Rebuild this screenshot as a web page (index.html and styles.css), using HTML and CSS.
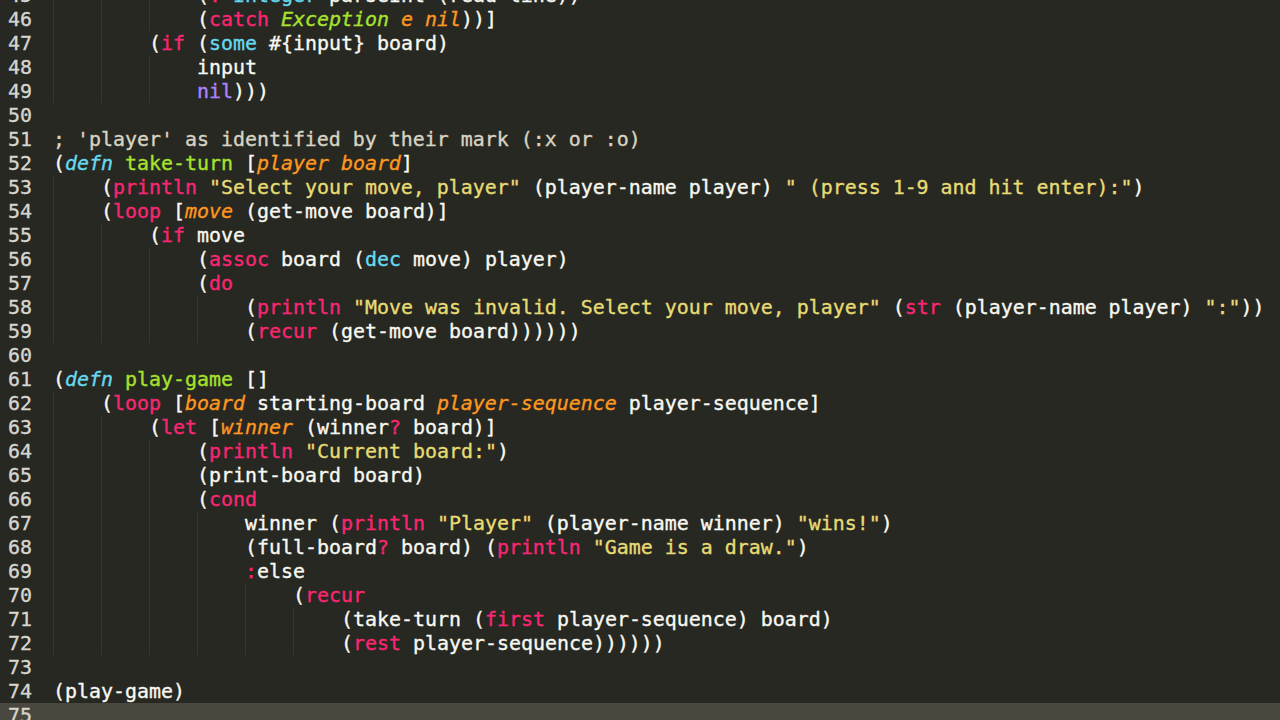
FILE: index.html
```html
<!DOCTYPE html>
<html>
<head>
<meta charset="utf-8">
<link rel="stylesheet" href="styles.css">
</head>
<body>
<div class="editor">
<div class="row"><span class="ln">45</span><span class="code"><span class="ind"></span><span class="ind"></span><span class="ind"></span>(<span class="k">.</span> <span class="t">Integer</span> parseInt (read-line))</span></div>
<div class="row"><span class="ln">46</span><span class="code"><span class="ind"></span><span class="ind"></span><span class="ind"></span>(<span class="k">catch</span> <span class="g i">Exception</span> <span class="p">e nil</span>))]</span></div>
<div class="row"><span class="ln">47</span><span class="code"><span class="ind"></span><span class="ind"></span>(<span class="k">if</span> (<span class="t">some</span> #{input} board)</span></div>
<div class="row"><span class="ln">48</span><span class="code"><span class="ind"></span><span class="ind"></span><span class="ind"></span>input</span></div>
<div class="row"><span class="ln">49</span><span class="code"><span class="ind"></span><span class="ind"></span><span class="ind"></span><span class="n">nil</span>)))</span></div>
<div class="row"><span class="ln">50</span><span class="code"></span></div>
<div class="row"><span class="ln">51</span><span class="code"><span class="c">; 'player' as identified by their mark (:x or :o)</span></span></div>
<div class="row"><span class="ln">52</span><span class="code">(<span class="t i">defn</span> <span class="g">take-turn</span> [<span class="p">player board</span>]</span></div>
<div class="row"><span class="ln">53</span><span class="code"><span class="ind"></span>(<span class="k">println</span> <span class="s">"Select your move, player"</span> (player-name player) <span class="s">" (press 1-9 and hit enter):"</span>)</span></div>
<div class="row"><span class="ln">54</span><span class="code"><span class="ind"></span>(<span class="k">loop</span> [<span class="p">move</span> (get-move board)]</span></div>
<div class="row"><span class="ln">55</span><span class="code"><span class="ind"></span><span class="ind"></span>(<span class="k">if</span> move</span></div>
<div class="row"><span class="ln">56</span><span class="code"><span class="ind"></span><span class="ind"></span><span class="ind"></span>(<span class="k">assoc</span> board (<span class="t">dec</span> move) player)</span></div>
<div class="row"><span class="ln">57</span><span class="code"><span class="ind"></span><span class="ind"></span><span class="ind"></span>(<span class="k">do</span></span></div>
<div class="row"><span class="ln">58</span><span class="code"><span class="ind"></span><span class="ind"></span><span class="ind"></span><span class="ind"></span>(<span class="k">println</span> <span class="s">"Move was invalid. Select your move, player"</span> (<span class="k">str</span> (player-name player) <span class="s">":"</span>))</span></div>
<div class="row"><span class="ln">59</span><span class="code"><span class="ind"></span><span class="ind"></span><span class="ind"></span><span class="ind"></span>(<span class="k">recur</span> (get-move board))))))</span></div>
<div class="row"><span class="ln">60</span><span class="code"></span></div>
<div class="row"><span class="ln">61</span><span class="code">(<span class="t i">defn</span> <span class="g">play-game</span> []</span></div>
<div class="row"><span class="ln">62</span><span class="code"><span class="ind"></span>(<span class="k">loop</span> [<span class="p">board</span> starting-board <span class="p">player-sequence</span> player-sequence]</span></div>
<div class="row"><span class="ln">63</span><span class="code"><span class="ind"></span><span class="ind"></span>(<span class="k">let</span> [<span class="p">winner</span> (winner<span class="k">?</span> board)]</span></div>
<div class="row"><span class="ln">64</span><span class="code"><span class="ind"></span><span class="ind"></span><span class="ind"></span>(<span class="k">println</span> <span class="s">"Current board:"</span>)</span></div>
<div class="row"><span class="ln">65</span><span class="code"><span class="ind"></span><span class="ind"></span><span class="ind"></span>(print-board board)</span></div>
<div class="row"><span class="ln">66</span><span class="code"><span class="ind"></span><span class="ind"></span><span class="ind"></span>(<span class="k">cond</span></span></div>
<div class="row"><span class="ln">67</span><span class="code"><span class="ind"></span><span class="ind"></span><span class="ind"></span><span class="ind"></span>winner (<span class="k">println</span> <span class="s">"Player"</span> (player-name winner) <span class="s">"wins!"</span>)</span></div>
<div class="row"><span class="ln">68</span><span class="code"><span class="ind"></span><span class="ind"></span><span class="ind"></span><span class="ind"></span>(full-board<span class="k">?</span> board) (<span class="k">println</span> <span class="s">"Game is a draw."</span>)</span></div>
<div class="row"><span class="ln">69</span><span class="code"><span class="ind"></span><span class="ind"></span><span class="ind"></span><span class="ind"></span><span class="k">:</span>else</span></div>
<div class="row"><span class="ln">70</span><span class="code"><span class="ind"></span><span class="ind"></span><span class="ind"></span><span class="ind"></span><span class="ind"></span>(<span class="k">recur</span></span></div>
<div class="row"><span class="ln">71</span><span class="code"><span class="ind"></span><span class="ind"></span><span class="ind"></span><span class="ind"></span><span class="ind"></span><span class="ind"></span>(take-turn (<span class="k">first</span> player-sequence) board)</span></div>
<div class="row"><span class="ln">72</span><span class="code"><span class="ind"></span><span class="ind"></span><span class="ind"></span><span class="ind"></span><span class="ind"></span><span class="ind"></span>(<span class="k">rest</span> player-sequence))))))</span></div>
<div class="row"><span class="ln">73</span><span class="code"></span></div>
<div class="row"><span class="ln">74</span><span class="code">(play-game)</span></div>
<div class="row current"><span class="ln">75</span><span class="code"></span></div>
</div>
</body>
</html>
```
FILE: styles.css
```css
html, body {
  margin: 0;
  padding: 0;
  background: #272822;
  overflow: hidden;
  height: 720px;
}

.editor {
  margin-top: -17px;
  font-family: "DejaVu Sans Mono", "Liberation Mono", monospace;
  font-size: 19.93px;
  color: #f8f8f2;
  -webkit-text-stroke: 0.35px currentColor;
}

.row {
  display: flex;
  height: 24px;
  line-height: 26px;
  white-space: pre;
}

.row.current {
  background: #4a483e;
}

.ln {
  width: 32px;
  flex: none;
  text-align: right;
  color: #d6d6d0;
}

.code {
  padding-left: 21px;
}

.ind {
  display: inline-block;
  width: 48px;
  height: 24px;
  vertical-align: top;
  box-shadow: inset 1px 0 0 #37362f;
}

.k { color: #f92672; }
.t { color: #66d9ef; }
.g { color: #a6e22e; }
.p { color: #fd971f; font-style: italic; }
.s { color: #e6db74; }
.n { color: #ae81ff; }
.c { color: #d8d3c2; }
.i { font-style: italic; }
```
